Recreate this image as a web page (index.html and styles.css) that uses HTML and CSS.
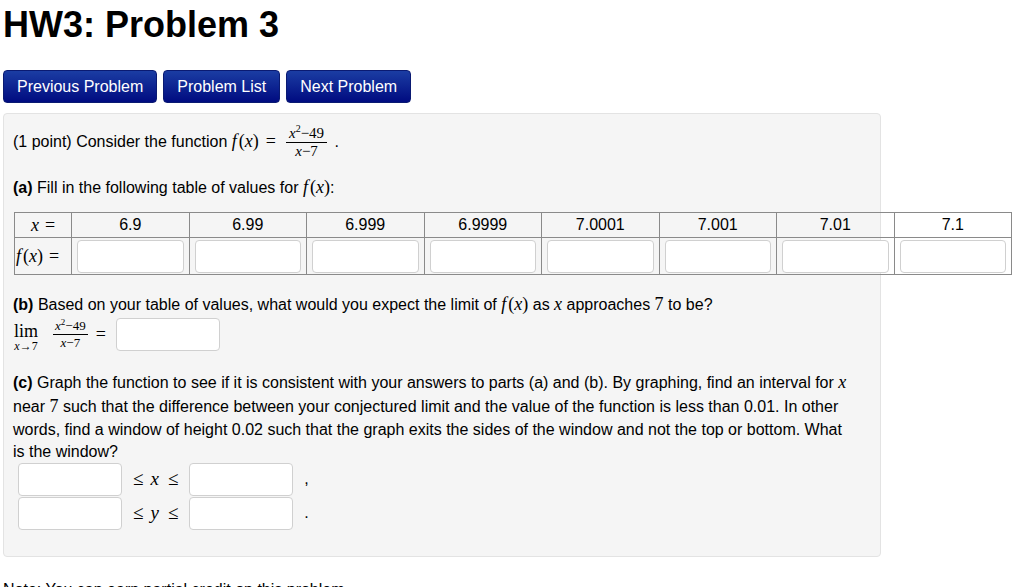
FILE: index.html
```html
<!DOCTYPE html>
<html lang="en">
<head>
    <meta charset="UTF-8">
    <meta name="viewport" content="width=device-width, initial-scale=1.0">
    <title>HW3: Problem 3</title>
    <link rel="stylesheet" href="styles.css">
</head>
<body>
    <h1 class="title">HW3: Problem 3</h1>

    <div class="nav">
        <button class="nav-btn">Previous Problem</button>
        <button class="nav-btn">Problem List</button>
        <button class="nav-btn">Next Problem</button>
    </div>

    <div class="problem">
        <div class="intro">(1 point) Consider the function <span class="m"><i class="fn">f</i>(<i>x</i>)<span class="eq">=</span></span><span class="frac"><span class="num"><i>x</i><sup>2</sup>−49</span><span class="den"><i>x</i>−7</span></span> .</div>

        <p class="part"><b>(a)</b> Fill in the following table of values for <span class="m"><i class="fn">f</i>(<i>x</i>)</span>:</p>

        <table class="values">
            <colgroup>
                <col class="c-lbl">
                <col><col><col><col><col><col><col><col>
            </colgroup>
            <tr class="head">
                <th class="lbl m"><i>x</i><span class="eq-t">=</span></th>
                <td>6.9</td>
                <td>6.99</td>
                <td>6.999</td>
                <td>6.9999</td>
                <td>7.0001</td>
                <td>7.001</td>
                <td>7.01</td>
                <td>7.1</td>
            </tr>
            <tr class="answers">
                <th class="lbl lbl-left m"><i class="fn">f</i>(<i>x</i>)<span class="eq-t">=</span></th>
                <td><input type="text"></td>
                <td><input type="text"></td>
                <td><input type="text"></td>
                <td><input type="text"></td>
                <td><input type="text"></td>
                <td><input type="text"></td>
                <td><input type="text"></td>
                <td><input type="text"></td>
            </tr>
        </table>

        <p class="part part-b"><b>(b)</b> Based on your table of values, what would you expect the limit of <span class="m"><i class="fn">f</i>(<i>x</i>)</span> as <span class="m"><i>x</i></span> approaches <span class="m">7</span> to be?</p>
        <div class="lim-row">
            <span class="lim m">lim<span class="under"><i>x</i>→7</span></span>
            <span class="frac frac-sm"><span class="num"><i>x</i><sup>2</sup>−49</span><span class="den"><i>x</i>−7</span></span>
            <span class="m eq">=</span>
            <input type="text" class="ans">
        </div>

        <p class="part part-c"><b>(c)</b> Graph the function to see if it is consistent with your answers to parts (a) and (b). By graphing, find an interval for <span class="m"><i>x</i></span> near <span class="m">7</span> such that the difference between your conjectured limit and the value of the function is less than 0.01. In other words, find a window of height 0.02 such that the graph exits the sides of the window and not the top or bottom. What is the window?</p>

        <div class="window">
            <div class="window-row">
                <input type="text" class="ans">
                <span class="m ineq">≤<i>x</i>≤</span>
                <input type="text" class="ans">
                <span class="punct">,</span>
            </div>
            <div class="window-row">
                <input type="text" class="ans">
                <span class="m ineq">≤<i>y</i>≤</span>
                <input type="text" class="ans">
                <span class="punct">.</span>
            </div>
        </div>
    </div>

    <p class="note">Note: You can earn partial credit on this problem.</p>
</body>
</html>
```

FILE: styles.css
```css
body {
    margin: 0;
    padding: 3px;
    font-family: "Liberation Sans", Helvetica, Arial, sans-serif;
    font-size: 16px;
    color: #000;
    background: #fff;
}
.title {
    margin: 0;
    font-size: 36px;
    line-height: 44px;
    font-weight: bold;
}
.nav {
    display: flex;
    gap: 6px;
    margin-top: 23px;
}
.nav-btn {
    height: 33px;
    padding: 0 13px;
    font-family: "Liberation Sans", Helvetica, Arial, sans-serif;
    font-size: 16px;
    color: #fff;
    background: linear-gradient(#1b3da3, #000b80);
    border: 1px solid #0a1a72;
    border-radius: 4px;
}
.problem {
    width: 878px;
    box-sizing: border-box;
    margin-top: 10px;
    padding: 10px 9px 26px;
    background: #f5f5f5;
    border: 1px solid #e3e3e3;
    border-radius: 4px;
}
.m {
    font-family: "Liberation Serif", "Times New Roman", serif;
    font-size: 18px;
}
.fn {
    margin-right: 2px;
}
.eq {
    margin: 0 9px 0 7px;
}
.intro {
    line-height: 34px;
}
.frac {
    display: inline-flex;
    flex-direction: column;
    align-items: center;
    vertical-align: middle;
    margin: 0 3px 0 1px;
    font-family: "Liberation Serif", "Times New Roman", serif;
    font-size: 15px;
    line-height: 15px;
}
.frac .num {
    padding: 0 3px 1px;
}
.frac .den {
    align-self: stretch;
    text-align: center;
    border-top: 1px solid #000;
    padding-top: 1px;
}
.frac sup {
    font-size: 10px;
    vertical-align: 6px;
    line-height: 0;
}
.part {
    margin: 17px 0 0;
    line-height: 22px;
}
.values {
    margin: 13px 0 0 1px;
    border-collapse: collapse;
    table-layout: fixed;
    width: 997px;
}
.values col {
    width: 117.5px;
}
.values col.c-lbl {
    width: 57px;
}
.values th,
.values td {
    border: 1px solid #8a8a8a;
    text-align: center;
    font-weight: normal;
    padding: 0 5px;
}
.values .head {
    height: 25px;
}
.values .answers {
    height: 37px;
}
.values .lbl {
    font-size: 18px;
    padding: 0;
}
.values .eq-t {
    margin-left: 6px;
}
.values .answers .lbl-left {
    text-align: left;
    padding: 0 0 0 1px;
    white-space: nowrap;
}
.values input {
    display: block;
    width: 100%;
    height: 33px;
    box-sizing: border-box;
    border: 1px solid #d0d0d0;
    border-radius: 4px;
    background: #fff;
}
.part-b {
    margin-top: 18px;
}
.lim-row {
    display: flex;
    align-items: center;
    height: 36px;
}
.lim {
    display: inline-flex;
    flex-direction: column;
    align-items: center;
    line-height: 17px;
    margin-left: 1px;
    padding-top: 6px;
}
.lim .under {
    font-size: 12px;
    line-height: 12px;
}
.frac-sm {
    margin-left: 15px;
    font-size: 13px;
    line-height: 14px;
}
.frac-sm .num {
    padding: 0 2px 1px;
}
.frac-sm sup {
    font-size: 9px;
    vertical-align: 5px;
}
.lim-row .eq {
    margin: 0 10px 0 5px;
}
.ans {
    width: 104px;
    height: 33px;
    box-sizing: border-box;
    border: 1px solid #d0d0d0;
    border-radius: 4px;
    background: #fff;
}
.part-c {
    margin-top: 19px;
    max-width: 842px;
    line-height: 22.7px;
}
.window {
    margin-top: -2px;
}
.window-row {
    display: flex;
    align-items: center;
    height: 34px;
    padding-left: 5px;
}
.ineq {
    margin: 0 11px 0 11px;
    font-size: 19px;
}
.ineq i {
    margin: 0 9px 0 7px;
}
.punct {
    margin-left: 11px;
}
.note {
    margin: 22px 0 0;
    line-height: 22px;
}
```
